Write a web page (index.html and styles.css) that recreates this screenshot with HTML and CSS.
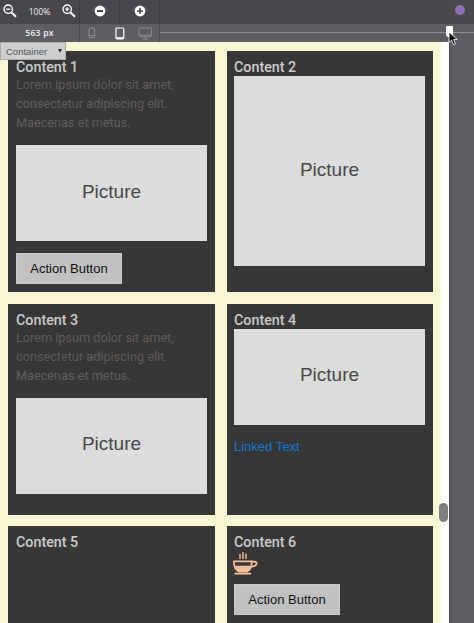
FILE: index.html
```html
<!DOCTYPE html>
<html lang="en">
<head>
  <meta charset="utf-8">
  <title>Layout preview</title>
  <link rel="stylesheet" href="styles.css">
</head>
<body>
  <div class="toolbar">
    <div class="zoom">
      <svg width="14" height="14" viewBox="0 0 14 14" fill="none" stroke="#fff" stroke-width="1.3">
        <circle cx="5.2" cy="5.2" r="4.2"/>
        <path d="M3.2 5.2h4"/>
        <path d="M8.5 8.5l4.5 4.3" stroke-width="2"/>
      </svg>
      <span>100%</span>
      <svg width="14" height="14" viewBox="0 0 14 14" fill="none" stroke="#fff" stroke-width="1.3">
        <circle cx="5.2" cy="5.2" r="4.2"/>
        <path d="M3.2 5.2h4M5.2 3.2v4"/>
        <path d="M8.5 8.5l4.5 4.3" stroke-width="2"/>
      </svg>
    </div>
    <div class="step">
      <svg width="12" height="12" viewBox="0 0 12 12">
        <circle cx="6" cy="6" r="5.4" fill="#fff"/>
        <path d="M3 6h6" stroke="#45454a" stroke-width="2"/>
      </svg>
    </div>
    <div class="step">
      <svg width="12" height="12" viewBox="0 0 12 12">
        <circle cx="6" cy="6" r="5.4" fill="#fff"/>
        <path d="M3 6h6M6 3v6" stroke="#45454a" stroke-width="1.6"/>
      </svg>
    </div>
    <div class="dot"></div>
  </div>

  <div class="sizebar">
    <div class="size">563 px</div>
    <div class="devices">
      <svg width="8" height="12" viewBox="0 0 8 12" fill="none" stroke="#8b8b90">
        <rect x="1" y="1" width="5.6" height="9.6" rx="1"/>
        <path d="M1 8.6h5.6"/>
      </svg>
      <svg width="10" height="13" viewBox="0 0 10 13" fill="none" stroke="#fff" stroke-width="1.2">
        <rect x="1" y="1" width="7.8" height="10.8" rx="1"/>
        <path d="M1 10.7h7.8"/>
      </svg>
      <svg width="15" height="13" viewBox="0 0 15 13" fill="none" stroke="#8b8b90">
        <rect x="1" y="1" width="12.6" height="8.6" rx="1"/>
        <path d="M1 8.1h12.6M7.3 9.6v2M4 12h6.6"/>
      </svg>
    </div>
    <div class="slider">
      <div class="thumb"></div>
    </div>
    <svg class="cursor" width="11" height="15" viewBox="0 0 11 15">
      <path d="M1 1v10.4l2.5-2.2 1.8 4.5 2.2-.9-1.9-4.3h3.6z" fill="#111" stroke="#fff" stroke-width=".8"/>
    </svg>
  </div>

  <div class="stage">
    <div class="container">
      <div class="tag">Container <span class="arrow"></span></div>

      <div class="card">
        <h2>Content 1</h2>
        <p>Lorem ipsum dolor sit amet, consectetur adipiscing elit. Maecenas et metus.</p>
        <div class="picture">Picture</div>
        <button>Action Button</button>
      </div>
      <div class="card">
        <h2>Content 2</h2>
        <div class="picture tall">Picture</div>
      </div>
      <div class="card">
        <h2>Content 3</h2>
        <p>Lorem ipsum dolor sit amet, consectetur adipiscing elit. Maecenas et metus.</p>
        <div class="picture">Picture</div>
      </div>
      <div class="card">
        <h2>Content 4</h2>
        <div class="picture">Picture</div>
        <a href="#">Linked Text</a>
      </div>
      <div class="card">
        <h2>Content 5</h2>
      </div>
      <div class="card">
        <h2>Content 6</h2>
        <svg class="coffee" width="25" height="24" viewBox="0 0 25 24" fill="none" stroke="#f7bd98">
          <path d="M7 3v5M10 1v7M13 2.5v5.5" stroke-width="1.4"/>
          <path d="M1 10.3h17.6v2c0 4-2 6.7-4.6 8.2H6c-3-1.5-5-4.2-5-8.2z" stroke-width="1.8"/>
          <path d="M2 14.8h16c-.8 3-2.3 5-4.3 6H6.3c-2-1-3.5-3-4.3-6z" fill="#f7bd98" stroke="none"/>
          <path d="M18.6 10.6h2.8c3.6 0 3.2 5-4 5.2" stroke-width="1.8"/>
          <path d="M1.5 22.6h16.5" stroke-width="1.8"/>
        </svg>
        <button>Action Button</button>
      </div>
    </div>
    <div class="scrolltrack">
      <div class="scrollbar"></div>
    </div>
  </div>
</body>
</html>
```
FILE: styles.css
```css
* {
  box-sizing: border-box;
}

body {
  margin: 0;
  height: 623px;
  overflow: hidden;
  background: #5e5d62;
  font-family: Roboto, "Liberation Sans", sans-serif;
}

svg {
  display: block;
}

/* top bars */
.toolbar {
  display: flex;
  align-items: center;
  height: 24px;
  padding-right: 9px;
  background: #48474c;
}

.zoom,
.step {
  display: flex;
  align-items: center;
  height: 24px;
  padding-bottom: 3px;
  border-right: 1px solid #3d3c41;
}

.zoom {
  width: 80px;
  padding-left: 3px;
  justify-content: space-between;
  padding-right: 3px;
  color: #eee;
  font: 8.5px "Open Sans", sans-serif;
}

.zoom span {
  padding-top: 2px;
}

.step {
  width: 40px;
  justify-content: center;
}

.dot {
  width: 10px;
  height: 10px;
  margin: 0 0 4px auto;
  border-radius: 50%;
  background: #8e70b4;
}

.sizebar {
  position: relative;
  display: flex;
  height: 18px;
  background: #5e5d62;
}

.size {
  width: 80px;
  border-right: 1px solid #4a494e;
  color: #f2f2f2;
  font: 600 8.5px/18px "Open Sans", sans-serif;
  letter-spacing: 0.3px;
  text-align: center;
}

.devices {
  display: flex;
  align-items: center;
  justify-content: space-between;
  width: 80px;
  padding: 0 6px 0 8px;
  border-right: 1px solid #4a494e;
}

.devices svg:nth-child(2) {
  margin-left: 5px;
}

.slider {
  flex: 1;
  height: 1px;
  margin-top: 8px;
  background: #8e8d91;
}

.thumb {
  width: 7px;
  height: 11px;
  margin: -6px 21px 0 auto;
  background: #fff;
  border-radius: 1px 1px 3px 3px;
}

.cursor {
  position: absolute;
  left: 448px;
  top: 7px;
  z-index: 2;
}

/* page preview */
.stage {
  display: flex;
  height: 581px;
}

.container {
  position: relative;
  display: grid;
  grid-template-columns: 207px 206px;
  grid-template-rows: 241px 211px 1fr;
  gap: 12px;
  row-gap: 11.5px;
  width: 441px;
  padding: 9px 8px 0;
  background: #f9f6d4;
}

.tag {
  position: absolute;
  left: 0;
  top: 0;
  display: flex;
  align-items: center;
  justify-content: space-between;
  width: 66px;
  height: 18px;
  padding: 0 3px 0 5px;
  border: 1px solid #aaa;
  background: #cfcfcf;
  color: #555;
  font: 9.5px "Liberation Sans", sans-serif;
}

.arrow {
  border: 2.5px solid transparent;
  border-top: 4px solid #333;
  border-bottom: 0;
}

.card {
  padding: 8px;
  background: #373737;
}

.card:nth-child(odd) {
  padding-left: 7px;
}

h2 {
  margin: 0;
  color: #cbcbcb;
  font-size: 14.3px;
  font-weight: 500;
  line-height: 17px;
}

p {
  width: 175px;
  margin: -1px 0 13px;
  color: #605c5a;
  font-size: 12.7px;
  line-height: 19px;
}

.picture {
  display: flex;
  align-items: center;
  justify-content: center;
  height: 96px;
  padding-bottom: 3px;
  background: #dcdcdc;
  color: #484848;
  font: 19px "Liberation Sans", sans-serif;
}

.tall {
  height: 190px;
}

button {
  display: block;
  width: 106px;
  height: 31px;
  margin-top: 12px;
  padding: 0;
  border: 1px solid #cacaca;
  background: #c1c1c1;
  color: #111;
  font: 13px "Liberation Sans", sans-serif;
}

a {
  display: block;
  margin-top: 14px;
  color: #1478d4;
  font: 13px "Liberation Sans", sans-serif;
  text-decoration: none;
}

.coffee {
  margin-left: -1px;
}

.coffee + button {
  margin-top: 9px;
}

.scrolltrack {
  width: 9px;
  border-right: 1px solid #47464b;
  background: #fff;
}

.scrollbar {
  position: relative;
  width: 9px;
  height: 19px;
  margin: 461px 0 0 -2px;
  border-radius: 5px;
  background: #7f7f7f;
}
```
